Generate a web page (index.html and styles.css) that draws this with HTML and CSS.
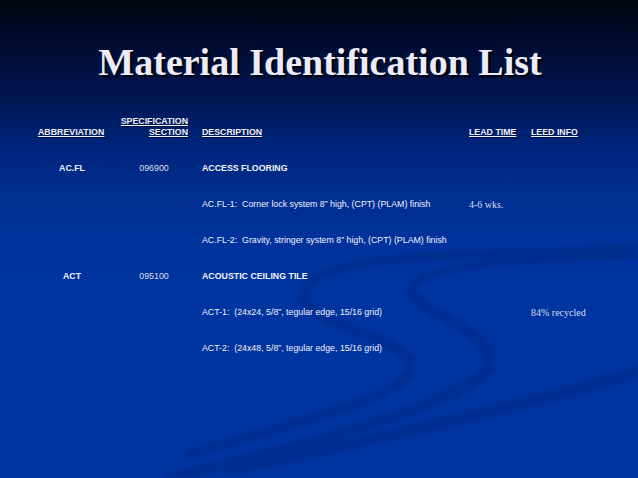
FILE: index.html
```html
<!DOCTYPE html>
<html>
<head>
<meta charset="utf-8">
<link rel="stylesheet" href="styles.css">
</head>
<body>
<div class="slide">
  <svg class="swirl" width="638" height="478" viewBox="0 0 638 478" aria-hidden="true">
    <g fill="none" stroke="#002a8a" stroke-linecap="round" opacity="0.6">
      <path d="M304 300 C300 270, 360 258, 460 255 S 600 250, 640 248" stroke-width="9"/>
      <path d="M304 300 C320 330, 400 335, 410 362 C420 395, 300 420, 190 455" stroke-width="10"/>
      <path d="M412 292 C412 272, 470 262, 560 258 S 630 256, 640 255" stroke-width="8"/>
      <path d="M412 292 C430 320, 495 330, 490 365 C485 395, 330 440, 170 478" stroke-width="11"/>
      <path d="M640 372 C560 395, 420 430, 230 470" stroke-width="12"/>
    </g>
  </svg>
  <h1 class="title">Material Identification List</h1>
  <div class="table">
    <div class="hd c1">ABBREVIATION</div>
    <div class="hd c2">SPECIFICATION<br>SECTION</div>
    <div class="hd c3">DESCRIPTION</div>
    <div class="hd c4">LEAD TIME</div>
    <div class="hd c5">LEED INFO</div>

    <div class="c1 b ctr">AC.FL</div>
    <div class="c2 num">096900</div>
    <div class="c3 b">ACCESS FLOORING</div>
    <div class="c4"></div>
    <div class="c5"></div>

    <div class="c1"></div>
    <div class="c2"></div>
    <div class="c3">AC.FL-1:&nbsp; Corner lock system 8” high, (CPT) (PLAM) finish</div>
    <div class="c4 serif">4-6 wks.</div>
    <div class="c5"></div>

    <div class="c1"></div>
    <div class="c2"></div>
    <div class="c3">AC.FL-2:&nbsp; Gravity, stringer system 8” high, (CPT) (PLAM) finish</div>
    <div class="c4"></div>
    <div class="c5"></div>

    <div class="c1 b ctr">ACT</div>
    <div class="c2 num">095100</div>
    <div class="c3 b">ACOUSTIC CEILING TILE</div>
    <div class="c4"></div>
    <div class="c5"></div>

    <div class="c1"></div>
    <div class="c2"></div>
    <div class="c3">ACT-1:&nbsp; (24x24, 5/8”, tegular edge, 15/16 grid)</div>
    <div class="c4"></div>
    <div class="c5 serif">84% recycled</div>

    <div class="c1"></div>
    <div class="c2"></div>
    <div class="c3">ACT-2:&nbsp; (24x48, 5/8”, tegular edge, 15/16 grid)</div>
    <div class="c4"></div>
    <div class="c5"></div>
  </div>
</div>
</body>
</html>
```

FILE: styles.css
```css
html, body {
  margin: 0;
  padding: 0;
}
body {
  width: 638px;
  height: 478px;
  overflow: hidden;
}
.slide {
  position: relative;
  width: 638px;
  height: 478px;
  overflow: hidden;
  background: linear-gradient(to bottom, #000410 0%, #000a2c 8%, #001650 20%, #00247a 30%, #002e90 40%, #00329c 50%, #0034a0 60%, #0034a0 100%);
  font-family: "Liberation Sans", Arial, sans-serif;
  color: #f2f2fa;
}
.swirl {
  position: absolute;
  left: 0;
  top: 0;
  z-index: 0;
  filter: blur(1.5px);
}
.title {
  position: relative;
  z-index: 1;
  margin: 0;
  padding-top: 40px;
  padding-left: 2px;
  height: 44px;
  line-height: 44px;
  text-align: center;
  font-family: "Liberation Serif", "Times New Roman", serif;
  font-weight: bold;
  font-size: 38px;
  color: #ebebfa;
  text-shadow: 2px 2px 1px rgba(0, 0, 0, 0.85);
}
.table {
  position: relative;
  z-index: 1;
  margin-top: 31.5px;
  padding-left: 38px;
  display: grid;
  grid-template-columns: 68px 68px 253px 48px auto;
  column-gap: 14px;
  row-gap: 25px;
  font-size: 8.8px;
  line-height: 11px;
}
.hd {
  font-weight: bold;
  text-decoration: underline;
  align-self: end;
  white-space: nowrap;
  text-shadow: 1px 1px 0 rgba(0, 0, 0, 0.45);
  color: #f0f0fb;
}
.hd.c2 {
  text-align: right;
}
.b {
  font-weight: bold;
}
.ctr {
  text-align: center;
}
.num {
  text-align: center;
  color: #dcdff0;
}
.c3 {
  white-space: nowrap;
}
.serif {
  font-family: "Liberation Serif", "Times New Roman", serif;
  font-size: 10px;
  color: #d9dcef;
  white-space: nowrap;
}
```
